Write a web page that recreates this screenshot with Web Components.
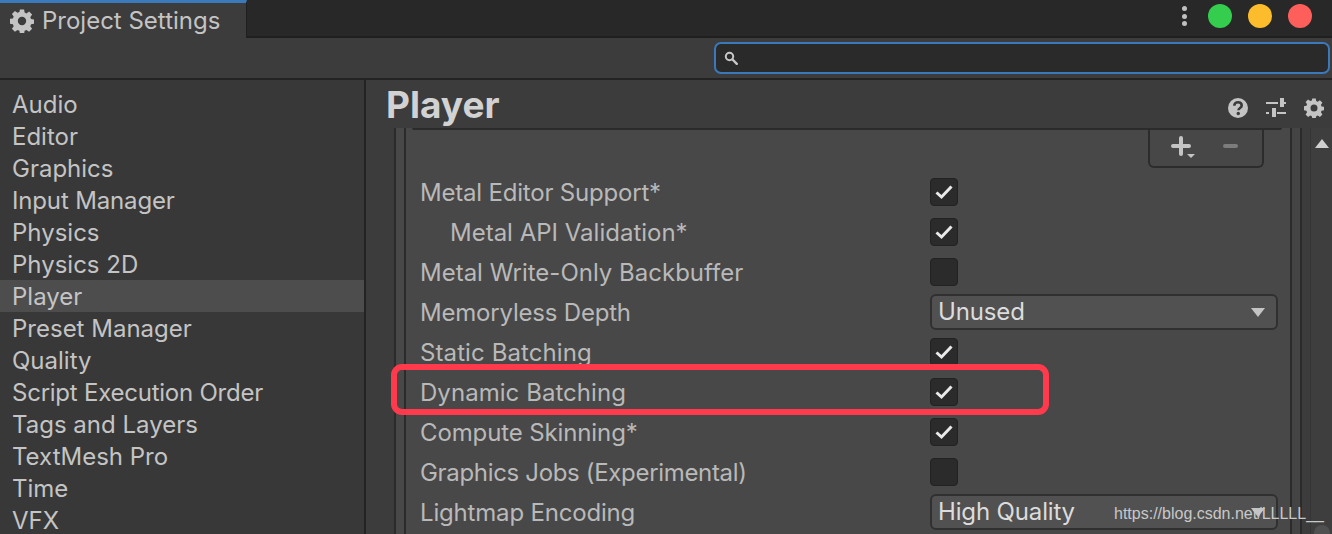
<!DOCTYPE html>
<html>
<head>
<meta charset="utf-8">
<title>Project Settings</title>
<style>
  html, body { margin: 0; background: #383838; }
  body { font-family: Inter, "Noto Sans", sans-serif; overflow: hidden; }
</style>
</head>
<body>
<settings-window></settings-window>
<script>
const GEAR = `<svg viewBox="0 0 24 24" width="100%" height="100%"><g fill="currentColor">
  <path fill-rule="evenodd" d="M9.900 0.500h4.200l.5 3.100 1.900.8 2.600-1.800 3 3-1.800 2.600.8 1.900 3.100.5v4.200l-3.100.5-.8 1.900 1.800 2.600-3 3-2.600-1.800-1.900.8-.5 3.100H9.900l-.5-3.100-1.900-.8-2.600 1.800-3-3 1.800-2.600-.8-1.900-3.100-.5V9.900l3.100-.5.8-1.900-1.800-2.600 3-3 2.600 1.800 1.900-.8zM12 7.800a4.200 4.200 0 1 0 0 8.400 4.200 4.200 0 0 0 0-8.400z"/>
</g></svg>`;

class SettingsTab extends HTMLElement {
  constructor() {
    super();
    this.attachShadow({ mode: 'open' }).innerHTML = `
      <style>
        :host { display: flex; align-items: center; box-sizing: border-box; width: 247px; height: 38px;
          background: #3c3c3c; border-top: 3px solid #3a79bb; border-right: 1px solid #1f1f1f;
          padding: 0 0 0 10px; gap: 8px; color: #c4c4c4; font-size: 24px; }
        .ico { width: 24px; height: 24px; color: #c4c4c4; }
      </style>
      <span class="ico">${GEAR}</span><slot></slot>`;
  }
}
customElements.define('settings-tab', SettingsTab);

class WindowControls extends HTMLElement {
  constructor() {
    super();
    this.attachShadow({ mode: 'open' }).innerHTML = `
      <style>
        :host { display: flex; align-items: center; gap: 16px; padding-right: 20px; padding-bottom: 6px; }
        .more { display: flex; flex-direction: column; gap: 2.500px; margin-right: 5.500px; }
        .more i { width: 5px; height: 5px; border-radius: 50%; background: #c0c0c0; }
        .dot { width: 24px; height: 24px; border-radius: 50%; }
      </style>
      <span class="more"><i></i><i></i><i></i></span>
      <span class="dot" style="background:#34cd4e"></span>
      <span class="dot" style="background:#fdbc2c"></span>
      <span class="dot" style="background:#fe5f5b"></span>`;
  }
}
customElements.define('window-controls', WindowControls);

class SearchBar extends HTMLElement {
  constructor() {
    super();
    this.attachShadow({ mode: 'open' }).innerHTML = `
      <style>
        :host { display: flex; justify-content: flex-end; align-items: flex-start; box-sizing: border-box;
          height: 42px; background: #3c3c3c; padding: 4px 2px 0 0; border-bottom: 2px solid #232323; }
        .field { display: flex; align-items: center; box-sizing: border-box; width: 616px; height: 32px;
          background: #2a2a2a; border: 2px solid #3a79bb; border-radius: 7px; padding-left: 7px; }
        svg { width: 16px; height: 16px; }
      </style>
      <div class="field">
        <svg viewBox="0 0 16 16"><circle cx="6.500" cy="6.500" r="3.700" fill="none" stroke="#c8c8c8" stroke-width="2"/><path d="M9.500 9.500l4.300 4.300" stroke="#c8c8c8" stroke-width="2.400" stroke-linecap="round"/></svg>
      </div>`;
  }
}
customElements.define('search-bar', SearchBar);

class SideList extends HTMLElement {
  constructor() {
    super();
    this.attachShadow({ mode: 'open' }).innerHTML = `
      <style>
        :host { display: block; box-sizing: border-box; flex: 0 0 364px; background: #383838; padding-top: 8px; overflow: hidden; }
      </style>
      <slot></slot>`;
  }
}
customElements.define('side-list', SideList);

class SideItem extends HTMLElement {
  constructor() {
    super();
    this.attachShadow({ mode: 'open' }).innerHTML = `
      <style>
        :host { display: block; height: 32px; line-height: 34px; padding-left: 12px; font-size: 24px; color: #c4c4c4; white-space: nowrap; }
        :host([selected]) { background: #4d4d4d; }
      </style>
      <slot></slot>`;
  }
}
customElements.define('side-item', SideItem);

class CheckBox extends HTMLElement {
  constructor() {
    super();
    const tick = this.hasAttribute('checked')
      ? `<svg viewBox="0 0 28 28" width="28" height="28"><path d="M6.500 14.500l5 4.500 10-10.500" fill="none" stroke="#eaeaea" stroke-width="3"/></svg>`
      : '';
    this.attachShadow({ mode: 'open' }).innerHTML = `
      <style>
        :host { display: block; box-sizing: border-box; width: 28px; height: 28px; background: #2b2b2b;
          border: 1px solid #222; border-radius: 4px; }
        svg { display: block; margin: -1px; }
      </style>${tick}`;
  }
}
customElements.define('check-box', CheckBox);

class DropDown extends HTMLElement {
  constructor() {
    super();
    this.attachShadow({ mode: 'open' }).innerHTML = `
      <style>
        :host { display: flex; align-items: center; justify-content: space-between; box-sizing: border-box;
          width: 348px; height: 36px; background: #515151; border: 2px solid #303030; border-radius: 6px;
          padding: 0 11px 2px 6px; font-size: 24px; color: #dcdcdc; letter-spacing: -0.15px; }
        i { width: 0; height: 0; margin-top: 2px; border-left: 7.500px solid transparent; border-right: 7.500px solid transparent; border-top: 9px solid #c4c4c4; }
      </style>
      <slot></slot><i></i>`;
  }
}
customElements.define('drop-down', DropDown);

class SettingRow extends HTMLElement {
  constructor() {
    super();
    const indent = this.hasAttribute('indent') ? 30 : 0;
    this.attachShadow({ mode: 'open' }).innerHTML = `
      <style>
        :host { display: grid; grid-template-columns: 510px 1fr; align-items: center; height: 40px;
          font-size: 24px; color: #b9b9b9; white-space: nowrap; }
        .label { padding-left: ${indent}px; }
        .value { letter-spacing: 0; }
      </style>
      <div class="label">${this.getAttribute('label')}</div>
      <div class="value"><slot></slot></div>`;
  }
}
customElements.define('setting-row', SettingRow);

class AddRemove extends HTMLElement {
  constructor() {
    super();
    this.attachShadow({ mode: 'open' }).innerHTML = `
      <style>
        :host { display: block; align-self: flex-end; box-sizing: border-box; flex: none; width: 116px; height: 38px;
          margin: 0 26px 4px 0; background: #474747; border: 2px solid #2c2c2c; border-top: 0;
          border-radius: 0 0 6px 6px; }
        svg { display: block; }
      </style>
      <svg width="112" height="36" viewBox="0 0 112 36">
        <path d="M31 8v16M23 16h16" stroke="#c4c4c4" stroke-width="4" stroke-linecap="round"/>
        <path d="M37 24h8l-4 4z" fill="#c4c4c4"/>
        <path d="M75 16h11" stroke="#7d7d7d" stroke-width="4" stroke-linecap="round"/>
      </svg>`;
  }
}
customElements.define('add-remove', AddRemove);

class PlayerPanel extends HTMLElement {
  constructor() {
    super();
    this.attachShadow({ mode: 'open' }).innerHTML = `
      <style>
        :host { display: flex; flex-direction: column; flex: 1; min-width: 0; background: #3c3c3c; overflow: hidden; }
        header { display: flex; align-items: center; justify-content: space-between; box-sizing: border-box;
          height: 48px; padding: 0 8px 0 20px; flex: none; }
        h1 { margin: 2px 0 0; font-size: 37px; font-weight: 700; color: #d2d2d2; line-height: 46px; }
        .tools { display: flex; align-items: center; gap: 18px; color: #c4c4c4; padding-top: 8px; }
        .tools svg, .tools span { display: block; width: 20px; height: 20px; }
        .body { display: flex; flex: 1; min-height: 0; }
        .gutter { flex: 0 0 28px; background: #3c3c3c; }
        .outer { flex: none; width: 896px; box-sizing: border-box; background: #484848; border-left: 2px solid #2b2b2b; padding-left: 8px; display: flex; }
        .inner { flex: 1; min-width: 0; box-sizing: border-box; background: #484848; border-left: 2px solid #2b2b2b;
          padding-left: 14px; display: flex; flex-direction: column; }
        .topline { flex: none; height: 2px; margin: 0 8px 0 -8px; background: #2b2b2b; border-radius: 0 0 2px 2px; }
        .right { flex: none; width: 10px; box-sizing: border-box; background: #444; border-left: 2px solid #2b2b2b; }
        .right2 { flex: none; width: 10px; box-sizing: border-box; background: #3c3c3c; border-left: 2px solid #2b2b2b; }
        .scroll { flex: 1; background: #3e3e3e; border-left: 1px solid #353535; display: flex; flex-direction: column; align-items: center; padding-top: 11px; }
        .scroll i { width: 0; height: 0; border-left: 7.500px solid transparent; border-right: 7.500px solid transparent; border-bottom: 9px solid #d0d0d0; }
        .scroll b { margin-top: auto; width: 16px; height: 9px; background: #505050; border-radius: 8px 8px 0 0; }
      </style>
      <header>
        <h1>Player</h1>
        <div class="tools">
          <svg viewBox="0 0 20 20"><circle cx="10" cy="10" r="10" fill="currentColor"/><path d="M6.300 7.700c0-2.200 1.600-3.500 3.700-3.500s3.700 1.300 3.700 3.200c0 2.600-3.300 2.500-3.300 4.900" fill="none" stroke="#3c3c3c" stroke-width="2.600"/><circle cx="10.300" cy="15.500" r="1.700" fill="#3c3c3c"/></svg>
          <svg viewBox="0 0 20 20" fill="currentColor"><path d="M0 4h12v2H0zM18 4h2v2h-2zM14 0h4v9h-4zM0 14h3v2H0zM11 14h9v2h-9zM6 10h4v9H6z"/></svg>
          <span>${GEAR}</span>
        </div>
      </header>
      <div class="body">
        <div class="gutter"></div>
        <div class="outer"><div class="inner">
          <div class="topline"></div>
          <add-remove></add-remove>
          <slot></slot>
        </div></div>
        <div class="right"></div>
        <div class="right2"></div>
        <div class="scroll"><i></i><b></b></div>
      </div>`;
  }
}
customElements.define('player-panel', PlayerPanel);

class SettingsWindow extends HTMLElement {
  constructor() {
    super();
    this.attachShadow({ mode: 'open' }).innerHTML = `
      <style>
        :host { display: block; position: relative; width: 1332px; height: 534px; overflow: hidden; background: #383838; }
        .top { display: flex; justify-content: space-between; align-items: stretch; box-sizing: border-box; height: 38px; background: #282828; box-shadow: inset 0 -2px 0 #1f1f1f; }
        .main { display: flex; height: 454px; }
        .split { flex: 0 0 2px; background: #232323; }
        .mark { position: absolute; box-sizing: border-box; left: 391px; top: 364px; width: 658px; height: 51px;
          border: 6px solid #fe3a4c; border-radius: 11px; }
        .url { position: absolute; left: 1114px; top: 505px; font: 16px "Liberation Sans", sans-serif; color: #c8c8c8; white-space: nowrap; }
      </style>
      <div class="top">
        <settings-tab>Project Settings</settings-tab>
        <window-controls></window-controls>
      </div>
      <search-bar></search-bar>
      <div class="main">
        <side-list>
          <side-item>Audio</side-item>
          <side-item>Editor</side-item>
          <side-item>Graphics</side-item>
          <side-item style="letter-spacing:-.15px">Input Manager</side-item>
          <side-item>Physics</side-item>
          <side-item>Physics 2D</side-item>
          <side-item selected>Player</side-item>
          <side-item>Preset Manager</side-item>
          <side-item>Quality</side-item>
          <side-item style="letter-spacing:-.24px">Script Execution Order</side-item>
          <side-item>Tags and Layers</side-item>
          <side-item>TextMesh Pro</side-item>
          <side-item>Time</side-item>
          <side-item>VFX</side-item>
        </side-list>
        <div class="split"></div>
        <player-panel>
          <setting-row label="Metal Editor Support*" style="letter-spacing:-.2px"><check-box checked></check-box></setting-row>
          <setting-row label="Metal API Validation*" indent><check-box checked></check-box></setting-row>
          <setting-row label="Metal Write-Only Backbuffer"><check-box></check-box></setting-row>
          <setting-row label="Memoryless Depth" style="letter-spacing:-.2px"><drop-down>Unused</drop-down></setting-row>
          <setting-row label="Static Batching" style="letter-spacing:.1px"><check-box checked></check-box></setting-row>
          <setting-row label="Dynamic Batching" style="letter-spacing:.05px"><check-box checked></check-box></setting-row>
          <setting-row label="Compute Skinning*" style="letter-spacing:-.12px"><check-box checked></check-box></setting-row>
          <setting-row label="Graphics Jobs (Experimental)" style="letter-spacing:-.33px"><check-box></check-box></setting-row>
          <setting-row label="Lightmap Encoding" style="letter-spacing:-.18px"><drop-down>High Quality</drop-down></setting-row>
        </player-panel>
      </div>
      <div class="mark"></div>
      <div class="url">https://blog.csdn.net/LLLLL__</div>`;
  }
}
customElements.define('settings-window', SettingsWindow);
</script>
</body>
</html>
